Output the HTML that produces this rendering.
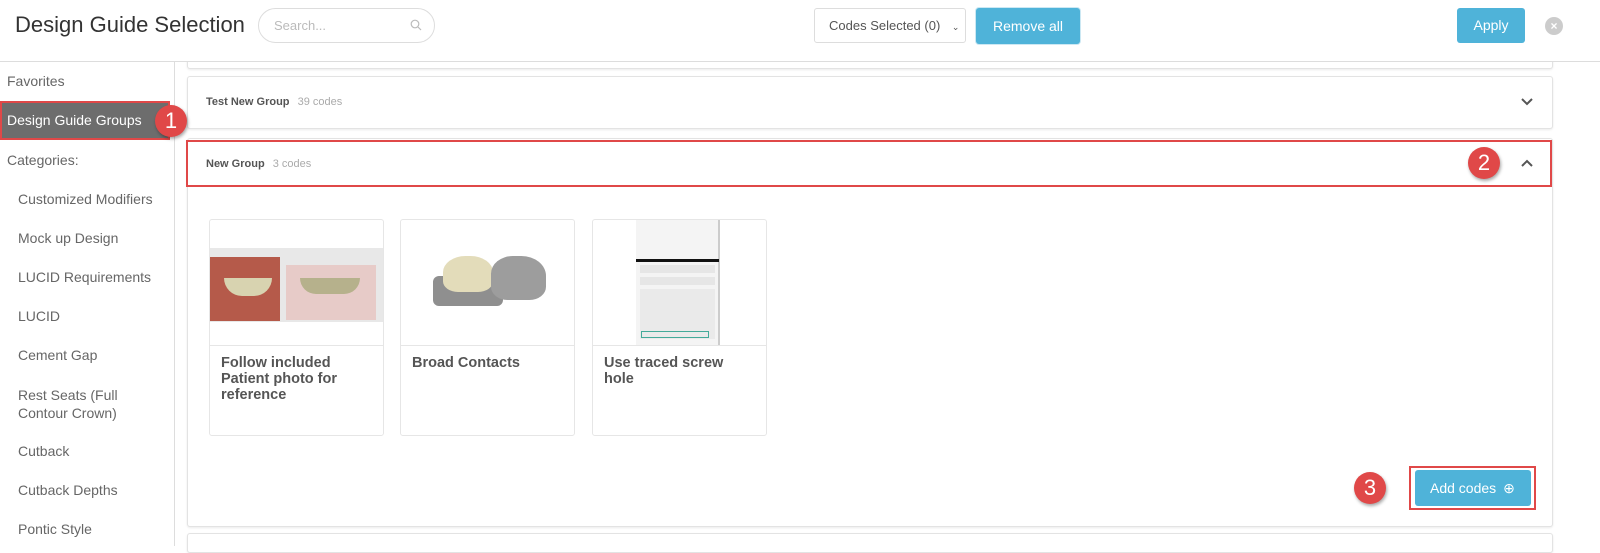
<!DOCTYPE html>
<html><head><meta charset="utf-8"><style>
*{box-sizing:border-box;margin:0;padding:0}
body{width:1600px;height:546px;overflow:hidden;background:#fff;font-family:"Liberation Sans",sans-serif;color:#555;position:relative}
.abs{position:absolute}
.badge{position:absolute;width:32px;height:32px;border-radius:50%;background:#e04848;color:#fff;font-size:22px;text-align:center;line-height:32px;box-shadow:1px 2px 3px rgba(0,0,0,.35);z-index:5}
.side{position:absolute;left:18px;font-size:14px;color:#666}
.card{position:absolute;background:#fff;border:1px solid #e3e3e3;border-radius:3px;box-shadow:0 1px 2px rgba(0,0,0,.08)}
.tile{position:absolute;top:219px;width:175px;height:217px;border:1px solid #e6e6e6;border-radius:3px;background:#fff}
.tile .img{height:126px;border-bottom:1px solid #e6e6e6;position:relative;overflow:hidden}
.tile .t{padding:9px 11px;font-weight:bold;font-size:14.5px;color:#555;line-height:16px;width:152px}
</style></head><body>
<div class="card" style="left:187px;top:40px;width:1366px;height:29px"></div>
<div class="abs" style="left:0;top:0;width:1600px;height:62px;background:#fff;border-bottom:1px solid #ddd;z-index:3">
<div class="abs" style="left:15px;top:12px;font-size:22px;color:#333">Design Guide Selection</div>
<div class="abs" style="left:258px;top:8px;width:177px;height:35px;border:1px solid #ddd;border-radius:18px"></div>
<div class="abs" style="left:274px;top:18px;font-size:13px;color:#bbb">Search...</div>
<svg class="abs" style="left:410px;top:19px" width="12" height="12"><circle cx="5" cy="5" r="3.8" fill="none" stroke="#bbb" stroke-width="1.2"/><line x1="8" y1="8" x2="11" y2="11" stroke="#bbb" stroke-width="1.2"/></svg>
<div class="abs" style="left:814px;top:8px;width:152px;height:35px;border:1px solid #ddd;border-radius:3px;font-size:13px;color:#555;line-height:33px;padding-left:14px">Codes Selected (0) <span style="margin-left:8px;font-size:9px">&#8964;</span></div>
<div class="abs" style="left:976px;top:8px;width:104px;height:36px;background:#4fb3d9;border-radius:3px;color:#fff;font-size:14px;text-align:center;line-height:36px;box-shadow:0 0 0 1px #cce8f3">Remove all</div>
<div class="abs" style="left:1457px;top:8px;width:68px;height:35px;background:#4fb3d9;border-radius:3px;color:#fff;font-size:14px;text-align:center;line-height:35px">Apply</div>
<div class="abs" style="left:1545px;top:17px;width:18px;height:18px;border-radius:50%;background:#ccc;color:#fff;font-size:12px;text-align:center;line-height:18px;font-weight:bold">×</div>
</div>
<div class="abs" style="left:174px;top:62px;width:1px;height:484px;background:#ddd"></div>
<div class="abs" style="left:7px;top:73px;font-size:14px;color:#666">Favorites</div>
<div class="abs" style="left:0;top:101px;width:170px;height:39px;background:#6d6d6d;border:2px solid #e04848;color:#fff;font-size:14px;line-height:35px;padding-left:5px">Design Guide Groups</div>
<div class="badge" style="left:155px;top:105px">1</div>
<div class="abs" style="left:7px;top:152px;font-size:14px;color:#666">Categories:</div>
<div class="side" style="top:191px">Customized Modifiers</div>
<div class="side" style="top:230px">Mock up Design</div>
<div class="side" style="top:269px">LUCID Requirements</div>
<div class="side" style="top:308px">LUCID</div>
<div class="side" style="top:347px">Cement Gap</div>
<div class="side" style="top:386px;line-height:18px">Rest Seats (Full<br>Contour Crown)</div>
<div class="side" style="top:443px">Cutback</div>
<div class="side" style="top:482px">Cutback Depths</div>
<div class="side" style="top:521px">Pontic Style</div>
<div class="card" style="left:187px;top:76px;width:1366px;height:53px"></div>
<div class="abs" style="left:206px;top:96px;font-size:11px;font-weight:bold;color:#555">Test New Group <span style="font-weight:normal;color:#aaa;margin-left:5px">39 codes</span></div>
<svg class="abs" style="left:1520px;top:97px" width="14" height="10"><polyline points="2,2 7,7 12,2" fill="none" stroke="#555" stroke-width="2"/></svg>
<div class="card" style="left:187px;top:138px;width:1366px;height:389px"></div>
<div class="abs" style="left:186px;top:140px;width:1366px;height:47px;border:2px solid #e04848"></div>
<div class="abs" style="left:206px;top:158px;font-size:11px;font-weight:bold;color:#555">New Group <span style="font-weight:normal;color:#aaa;margin-left:5px">3 codes</span></div>
<svg class="abs" style="left:1520px;top:158px" width="14" height="10"><polyline points="2,8 7,3 12,8" fill="none" stroke="#555" stroke-width="2"/></svg>
<div class="badge" style="left:1468px;top:147px">2</div>
<div class="tile" style="left:209px"><div class="img">
<div class="abs" style="left:0;top:28px;width:175px;height:74px;background:#e8e8e8"></div>
<div class="abs" style="left:0;top:37px;width:70px;height:64px;background:#b55a4a"></div>
<div class="abs" style="left:14px;top:58px;width:48px;height:18px;background:#d8d3b0;border-radius:0 0 20px 20px"></div>
<div class="abs" style="left:76px;top:45px;width:90px;height:55px;background:#e7cbc8"></div>
<div class="abs" style="left:90px;top:58px;width:60px;height:16px;background:#b6b18c;border-radius:0 0 20px 20px"></div>
</div><div class="t">Follow included Patient photo for reference</div></div>
<div class="tile" style="left:400px"><div class="img">
<div class="abs" style="left:32px;top:56px;width:70px;height:30px;background:#8f8f8f;border-radius:6px"></div>
<div class="abs" style="left:42px;top:36px;width:50px;height:36px;background:#e3dcba;border-radius:45% 45% 30% 30%"></div>
<div class="abs" style="left:90px;top:36px;width:55px;height:44px;background:#9d9d9d;border-radius:40% 45% 30% 30%"></div>
</div><div class="t">Broad Contacts</div></div>
<div class="tile" style="left:592px"><div class="img">
<div class="abs" style="left:43px;top:0;width:84px;height:126px;background:#f4f4f4;border-right:2px solid #ccc"></div>
<div class="abs" style="left:43px;top:39px;width:83px;height:3px;background:#111"></div>
<div class="abs" style="left:47px;top:45px;width:75px;height:8px;background:#e6e6e6"></div>
<div class="abs" style="left:47px;top:57px;width:75px;height:8px;background:#e6e6e6"></div>
<div class="abs" style="left:47px;top:69px;width:75px;height:50px;background:#eaeaea"></div>
<div class="abs" style="left:48px;top:111px;width:68px;height:7px;border:1px solid #4a9"></div>
</div><div class="t" style="width:145px">Use traced screw hole</div></div>
<div class="abs" style="left:1409px;top:466px;width:127px;height:44px;border:2px solid #e04848"></div>
<div class="abs" style="left:1415px;top:470px;width:116px;height:36px;background:#4fb3d9;border-radius:3px;color:#fff;font-size:14px;line-height:36px;padding-left:15px">Add codes <span style="margin-left:3px">⊕</span></div>
<div class="badge" style="left:1354px;top:472px">3</div>
<div class="card" style="left:187px;top:533px;width:1366px;height:20px"></div>
</body></html>
